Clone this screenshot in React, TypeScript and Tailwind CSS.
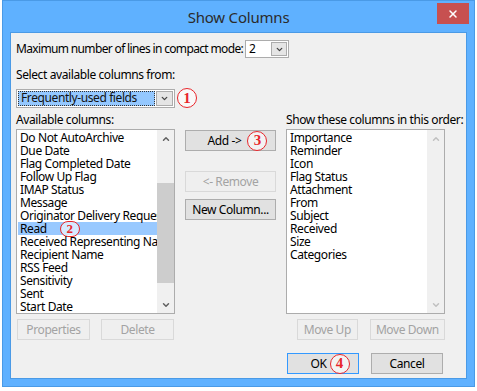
import { ChevronDown, ChevronUp, X } from "lucide-react";

const available = [
  "Do Not AutoArchive",
  "Due Date",
  "Flag Completed Date",
  "Follow Up Flag",
  "IMAP Status",
  "Message",
  "Originator Delivery Requested",
  "Read",
  "Received Representing Name",
  "Recipient Name",
  "RSS Feed",
  "Sensitivity",
  "Sent",
  "Start Date",
];

const shown = [
  "Importance",
  "Reminder",
  "Icon",
  "Flag Status",
  "Attachment",
  "From",
  "Subject",
  "Received",
  "Size",
  "Categories",
];

const Badge = ({ n, className = "" }: { n: number; className?: string }) => (
  <span
    className={
      "inline-flex items-center justify-center shrink-0 rounded-full border-[1.5px] border-[#e8262b] bg-white/60 text-[#e8262b] font-bold leading-none tracking-normal font-['Liberation_Serif',serif] " +
      className
    }
  >
    {n}
  </span>
);

const Btn = ({
  children,
  disabled,
  primary,
  className = "",
}: {
  children: React.ReactNode;
  disabled?: boolean;
  primary?: boolean;
  className?: string;
}) => (
  <div
    className={
      "h-[21px] flex items-center justify-center border " +
      (disabled
        ? "border-[#d9d9d9] bg-[#efefef] text-[#a3a3a3] "
        : primary
        ? "border-[#3399ff] bg-[#e1e1e1] text-black "
        : "border-[#adadad] bg-[#e1e1e1] text-black ") +
      className
    }
  >
    {children}
  </div>
);

const ScrollBar = ({ active }: { active?: boolean }) => (
  <div className="w-[17px] h-full flex flex-col bg-[#f0f0f0]">
    <div className="h-[17px] flex items-center justify-center">
      <ChevronUp
        className={"w-[10px] h-[10px] " + (active ? "text-[#606060]" : "text-[#c0c0c0]")}
        strokeWidth={3.5}
      />
    </div>
    <div className="flex-1 flex flex-col">
      {active && (
        <>
          <div className="h-[36px]" />
          <div className="h-[100px] bg-[#cdcdcd]" />
        </>
      )}
    </div>
    <div className="h-[17px] flex items-center justify-center">
      <ChevronDown
        className={"w-[10px] h-[10px] " + (active ? "text-[#606060]" : "text-[#c0c0c0]")}
        strokeWidth={3.5}
      />
    </div>
  </div>
);

export default function App() {
  return (
    <div className="w-[477px] h-[391px] bg-white font-['Noto_Sans',sans-serif] text-[12px] text-black">
      <div className="ml-[2px] w-[473px] h-[387px] bg-[#5fb1ff] border border-[#4a9ae6] flex flex-col">
        {/* title bar */}
        <div className="h-[31px] grid grid-cols-[1fr_auto_1fr]">
          <div />
          <div className="pt-[5px] text-[15px] text-[#2b2b2b] tracking-[-0.2px]">Show Columns</div>
          <div className="flex justify-end pr-[5px] pt-[2px]">
            <div className="w-[32px] h-[21px] bg-[#c75050] flex items-center justify-center">
              <X className="w-[12px] h-[12px] text-white" strokeWidth={3} />
            </div>
          </div>
        </div>

        {/* client area */}
        <div className="ml-[7px] w-[457px] h-[347px] bg-[#f0f0f0] border border-[#4a9ae6] flex flex-col pl-[5px] pt-[7px] tracking-[-0.4px]">
          <div className="flex items-center h-[18px]">
            <span className="w-[229px] whitespace-nowrap tracking-[-0.65px]">Maximum number of lines in compact mode:</span>
            <div className="w-[44px] h-[18px] bg-white border border-[#acacac] flex items-center justify-between pl-[3px] pr-[1px]">
              <span>2</span>
              <div className="w-[16px] h-[14px] bg-[#e5e5e5] border border-[#acacac] flex items-center justify-center">
                <ChevronDown className="w-[9px] h-[9px] text-[#444]" strokeWidth={3.5} />
              </div>
            </div>
          </div>

          <div className="mt-[10px] h-[14px] leading-[14px]">Select available columns from:</div>

          <div className="mt-[6px] flex items-center gap-[2px]">
            <div className="w-[159px] h-[19px] bg-white border border-[#acacac] flex items-center p-[1px]">
              <div className="flex-1 h-full bg-[#94c8ff] border border-dotted border-[#333] flex items-center pl-[2px] text-[#111]">
                Frequently-used fields
              </div>
              <div className="w-[17px] h-full bg-[#e5e5e5] border border-[#acacac] ml-[1px] flex items-center justify-center">
                <ChevronDown className="w-[9px] h-[9px] text-[#444]" strokeWidth={3.5} />
              </div>
            </div>
            <Badge n={1} className="w-[20px] h-[20px] text-[15px]" />
          </div>

          {/* three columns */}
          <div className="mt-[4px] flex">
            {/* left column */}
            <div className="w-[159px] flex flex-col">
              <div className="h-[17px] leading-[16px]">Available columns:</div>
              <div className="h-[185px] bg-white border border-[#acacac] flex overflow-hidden">
                <div className="flex-1 min-w-0 pt-[1px] pl-[1px] overflow-hidden">
                  {available.map((item) => (
                    <div
                      key={item}
                      className={
                        "h-[13px] leading-[13px] pl-[2px] whitespace-nowrap flex items-center " +
                        (item === "Read" ? "bg-[#99c9ff]" : "")
                      }
                    >
                      {item}
                      {item === "Read" && (
                        <Badge n={2} className="ml-[13px] w-[20px] h-[16px] text-[13px]" />
                      )}
                    </div>
                  ))}
                </div>
                <ScrollBar active />
              </div>
              <div className="mt-[5px] flex gap-[11px] pl-[1px]">
                <Btn disabled className="w-[73px]">Properties</Btn>
                <Btn disabled className="w-[73px]">Delete</Btn>
              </div>
            </div>

            {/* middle column */}
            <div className="ml-[10px] w-[91px] flex flex-col pt-[18px]">
              <Btn className="h-[20px] gap-[6px] pl-[14px]">
                <span>Add -&gt;</span>
                <Badge n={3} className="w-[20px] h-[20px] text-[15px]" />
              </Btn>
              <Btn disabled className="mt-[20px] h-[20px]">&lt;- Remove</Btn>
              <Btn className="mt-[7px]">New Column...</Btn>
            </div>

            {/* right column */}
            <div className="ml-[10px] w-[159px] flex flex-col">
              <div className="h-[17px] leading-[16px] whitespace-nowrap">Show these columns in this order:</div>
              <div className="h-[185px] bg-white border border-[#acacac] flex">
                <div className="flex-1 pt-[1px] pl-[3px]">
                  {shown.map((item) => (
                    <div key={item} className="h-[13px] leading-[13px]">
                      {item}
                    </div>
                  ))}
                </div>
                <ScrollBar />
              </div>
              <div className="mt-[5px] flex gap-[12px] pl-[11px]">
                <Btn disabled className="w-[62px]">Move Up</Btn>
                <Btn disabled className="w-[77px]">Move Down</Btn>
              </div>
            </div>
          </div>

          {/* OK / Cancel */}
          <div className="mt-[13px] flex gap-[12px] pl-[271px]">
            <Btn primary className="w-[72px] gap-[3px] pl-[14px]">
              <span>OK</span>
              <Badge n={4} className="w-[20px] h-[20px] text-[15px]" />
            </Btn>
            <Btn className="w-[72px]">Cancel</Btn>
          </div>
        </div>
      </div>
    </div>
  );
}
